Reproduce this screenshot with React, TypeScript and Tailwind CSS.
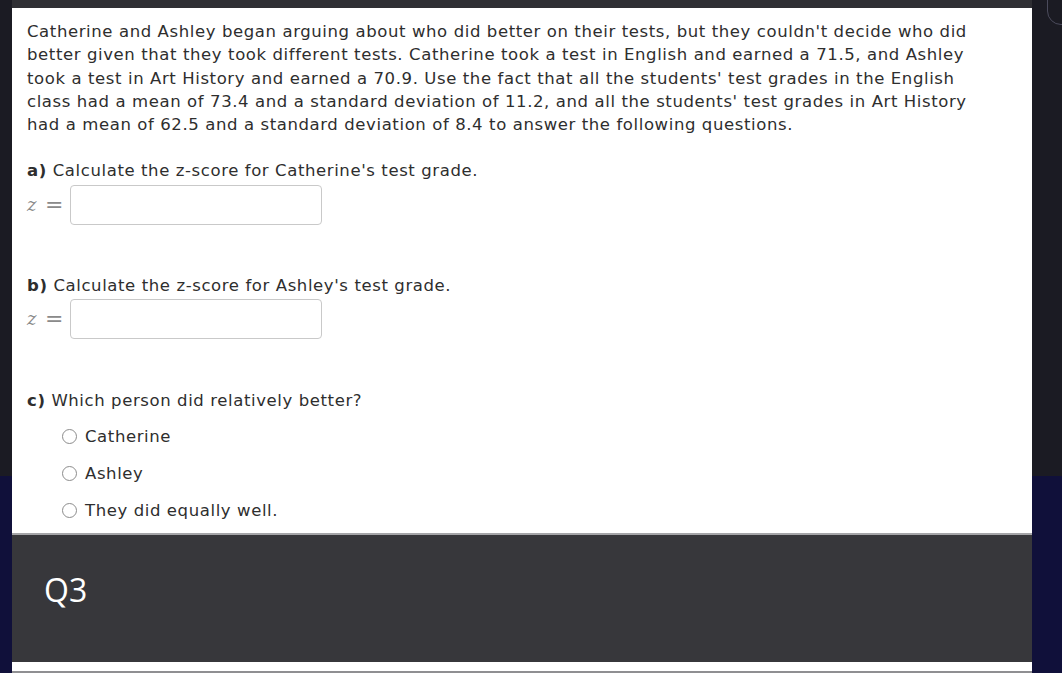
import React from "react";

const font = { fontFamily: '"DejaVu Sans", Verdana, sans-serif' };

function ZInput() {
  return (
    <div className="mt-[2px] flex items-center">
      <span className="flex w-[43px] items-center text-[#8a8a8a]" style={{ fontFamily: '"DejaVu Serif", serif' }}>
        <span className="text-[18px] italic">z</span>
        <span className="ml-[8px] text-[22px] leading-none">=</span>
      </span>
      <div className="h-[40px] w-[252px] rounded-[4px] border border-[#c9c9c9] bg-white" />
    </div>
  );
}

function Radio(props: { label: string }) {
  return (
    <label className="flex h-[37px] items-center pl-[35px]">
      <span className="h-[15px] w-[15px] rounded-full border border-[#8c8c8c] bg-white" />
      <span className="ml-[8px]">{props.label}</span>
    </label>
  );
}

export default function App() {
  return (
    <div className="relative h-[673px] w-[1062px] overflow-hidden bg-[linear-gradient(to_bottom,#1b1b23_476px,#10103a_476px)]">
      {/* corner of something outside the frame */}
      <div className="absolute left-[1047px] top-[-30px] h-[55px] w-[40px] rounded-[14px] border border-[#4b4b5c]" />

      <div className="ml-[12px] w-[1020px]">
        <div className="h-[8px] bg-[#2f2f34]" />

        <div
          className="h-[525px] bg-white pl-[15px] pt-[12px] text-[16.5px] leading-[23.3px] tracking-[0.6px] text-[#2e2e2e]"
          style={font}
        >
          <p>
            Catherine and Ashley began arguing about who did better on their tests, but they couldn't decide who did
            <br />
            better given that they took different tests. Catherine took a test in English and earned a 71.5, and Ashley
            <br />
            took a test in Art History and earned a 70.9. Use the fact that all the students' test grades in the English
            <br />
            class had a mean of 73.4 and a standard deviation of 11.2, and all the students' test grades in Art History
            <br />
            had a mean of 62.5 and a standard deviation of 8.4 to answer the following questions.
          </p>

          <p className="mt-[23px]">
            <b>a)</b> Calculate the z-score for Catherine's test grade.
          </p>
          <ZInput />

          <p className="mt-[49px]">
            <b>b)</b> Calculate the z-score for Ashley's test grade.
          </p>
          <ZInput />

          <p className="mt-[50px]">
            <b>c)</b> Which person did relatively better?
          </p>
          <div className="mt-[6px]">
            <Radio label="Catherine" />
            <Radio label="Ashley" />
            <Radio label="They did equally well." />
          </div>
        </div>

        <div className="h-[2px] bg-[#a5a5a8]" />
        <div className="h-[127px] bg-[#37373b] pl-[32px] pt-[36px]">
          <div className="text-[32px] leading-[38px] text-white" style={{ fontFamily: '"Open Sans", Lato, sans-serif' }}>
            Q3
          </div>
        </div>
        <div className="h-[9px] bg-white" />
        <div className="h-[2px] bg-[#8f8f92]" />
      </div>
    </div>
  );
}
